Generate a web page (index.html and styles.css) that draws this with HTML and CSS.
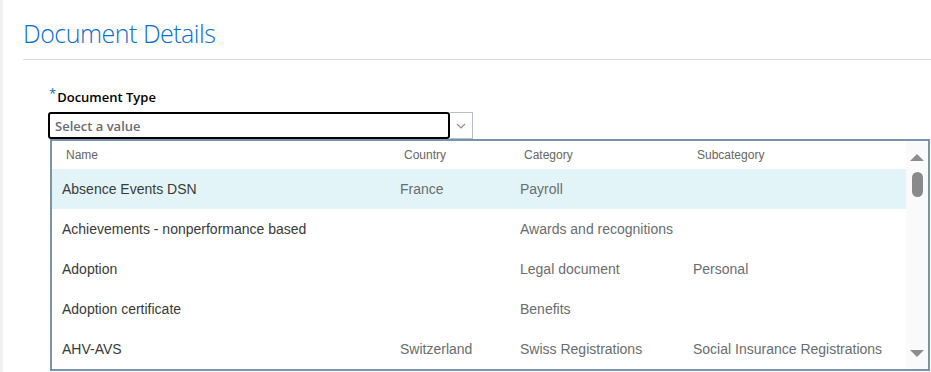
FILE: index.html
```html
<!DOCTYPE html>
<html lang="en">
<head>
<meta charset="utf-8">
<title>Document Details</title>
<link rel="stylesheet" href="styles.css">
</head>
<body>
<div class="page">
  <h1 class="title">Document Details</h1>
  <div class="divider"></div>
  <div class="field">
    <div class="label"><span class="req">*</span>Document Type</div>
    <div class="combo">
      <div class="input">Select a value</div>
      <div class="drop-btn">
        <svg width="10" height="6" viewBox="0 0 10 6"><path d="M1 1 L5 5 L9 1" fill="none" stroke="#8a8f96" stroke-width="1.1"/></svg>
      </div>
      <div class="popup">
        <div class="list">
          <div class="row head">
            <div>Name</div><div>Country</div><div>Category</div><div>Subcategory</div>
          </div>
          <div class="row sel">
            <div class="name">Absence Events DSN</div><div>France</div><div>Payroll</div><div></div>
          </div>
          <div class="row">
            <div class="name">Achievements - nonperformance based</div><div></div><div>Awards and recognitions</div><div></div>
          </div>
          <div class="row">
            <div class="name">Adoption</div><div></div><div>Legal document</div><div>Personal</div>
          </div>
          <div class="row">
            <div class="name">Adoption certificate</div><div></div><div>Benefits</div><div></div>
          </div>
          <div class="row">
            <div class="name">AHV-AVS</div><div>Switzerland</div><div>Swiss Registrations</div><div>Social Insurance Registrations</div>
          </div>
        </div>
        <div class="scrollbar">
          <div class="arrow up"></div>
          <div class="thumb"></div>
          <div class="spacer"></div>
          <div class="arrow down"></div>
        </div>
      </div>
    </div>
  </div>
</div>
</body>
</html>
```

FILE: styles.css
```css
html, body {
  margin: 0;
  padding: 0;
  background: #ffffff;
}
.page {
  border-left: 3px solid #f0f0f0;
  padding-left: 20px;
  height: 372px;
  box-sizing: border-box;
  overflow: hidden;
  font-family: "Open Sans", "Liberation Sans", sans-serif;
}
.title {
  margin: 0;
  padding-top: 16px;
  font-family: "Open Sans", sans-serif;
  font-weight: 300;
  font-size: 25px;
  line-height: 34px;
  color: #0a6ed1;
  letter-spacing: -0.5px;
}
.divider {
  margin-top: 9px;
  border-top: 1px solid #d9dde3;
}
.field {
  margin-left: 25px;
  padding-top: 28px;
}
.label {
  font-size: 13px;
  font-weight: 600;
  color: #000;
  line-height: 18px;
  padding-left: 1px;
}
.req {
  color: #0a6ed1;
  font-weight: 400;
  position: relative;
  top: -4px;
  margin-right: 1px;
}
.combo {
  display: flex;
  margin-top: 6px;
  position: relative;
}
.input {
  width: 402px;
  height: 27px;
  box-sizing: border-box;
  border: 2px solid #000;
  border-radius: 3px;
  font-size: 13px;
  font-weight: 600;
  color: #6a6d70;
  line-height: 24px;
  padding-left: 5px;
}
.drop-btn {
  width: 23px;
  height: 27px;
  box-sizing: border-box;
  border: 1px solid #b7bec6;
  border-left: none;
  display: flex;
  align-items: center;
  justify-content: center;
}
.popup {
  position: absolute;
  left: 2px;
  top: 27px;
  width: 880px;
  height: 232px;
  box-sizing: border-box;
  border: 2px solid #7b93aa;
  background: #fff;
  display: flex;
  font-family: "Liberation Sans", Arial, sans-serif;
}
.list {
  flex: 1;
}
.row {
  display: grid;
  grid-template-columns: 338px 120px 173px 1fr;
  height: 40px;
  align-items: center;
  font-size: 14px;
  color: #6a6d70;
}
.row > div {
  padding-left: 10px;
  white-space: nowrap;
}
.row .name {
  color: #3a3a3a;
}
.row.head {
  height: 28px;
  font-size: 12px;
  color: #666;
}
.row.head > div {
  padding-left: 14px;
}
.row.sel {
  background: #e3f4f9;
}
.scrollbar {
  width: 22px;
  background: #fafafa;
  display: flex;
  flex-direction: column;
  align-items: center;
}
.arrow {
  width: 0;
  height: 0;
  border-left: 7px solid transparent;
  border-right: 7px solid transparent;
}
.arrow.up {
  margin-top: 13px;
  border-bottom: 7px solid #8c8c8c;
}
.arrow.down {
  margin-bottom: 12px;
  border-top: 7px solid #8c8c8c;
}
.thumb {
  margin-top: 11px;
  width: 11px;
  height: 25px;
  border-radius: 6px;
  background: #8a8a8a;
}
.spacer {
  flex: 1;
}
```
